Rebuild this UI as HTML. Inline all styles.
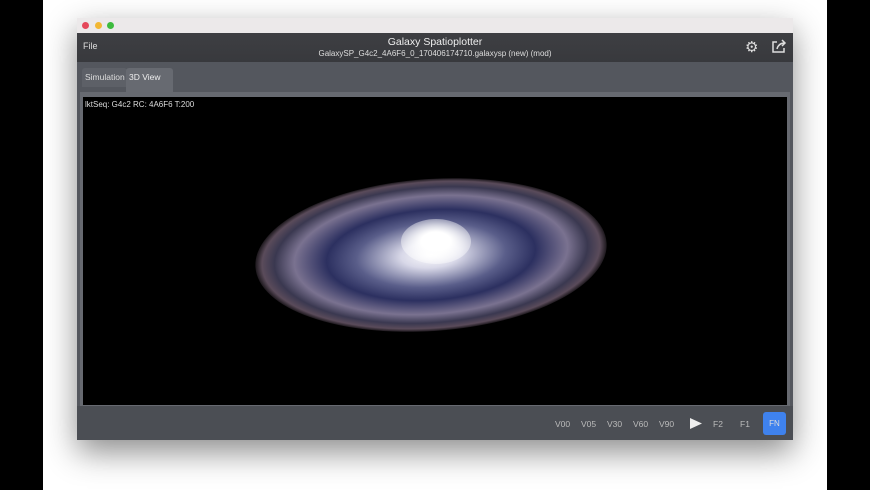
<!DOCTYPE html>
<html><head><style>
body{margin:0;width:870px;height:490px;background:#fff;position:relative;overflow:hidden;font-family:"Liberation Sans",sans-serif}
.a{position:absolute}
.v{position:absolute;top:419px;font-size:8.5px;color:#bbb}
</style></head><body>
<div class="a" style="left:0;top:0;width:43px;height:490px;background:#000"></div>
<div class="a" style="left:827px;top:0;width:43px;height:490px;background:#000"></div>
<div class="a" style="left:77px;top:18px;width:716px;height:422px;box-shadow:0 12px 30px rgba(0,0,0,.45);background:#54575e"></div>
<div class="a" style="left:77px;top:18px;width:716px;height:15px;background:#ece9ea"></div>
<div class="a" style="left:82px;top:22px;width:7px;height:7px;border-radius:50%;background:#e5485a"></div>
<div class="a" style="left:95px;top:22px;width:7px;height:7px;border-radius:50%;background:#f2b733"></div>
<div class="a" style="left:107px;top:22px;width:7px;height:7px;border-radius:50%;background:#3dbb3e"></div>
<div class="a" style="left:77px;top:33px;width:716px;height:29px;background:linear-gradient(#3e3f43,#38393d)"></div>
<div class="a" style="left:83px;top:41px;font-size:9px;color:#ddd">File</div>
<div class="a" style="left:77px;top:36px;width:716px;text-align:center;font-size:10.5px;color:#eee">Galaxy Spatioplotter</div>
<div class="a" style="left:77px;top:49px;width:716px;text-align:center;font-size:8px;color:#ddd">GalaxySP_G4c2_4A6F6_0_170406174710.galaxysp (new) (mod)</div>
<div class="a" style="left:745px;top:38px;font-size:15px;color:#ddd">⚙</div>
<svg class="a" style="left:771px;top:39px" width="16" height="14"><path d="M6 3H2v10h11V9" fill="none" stroke="#ddd" stroke-width="1.5"/><path d="M6 10c1-4 4-6 8-6M11 1l3 3-3 3" fill="none" stroke="#ddd" stroke-width="1.5"/></svg>
<div class="a" style="left:82px;top:68px;width:42px;height:19px;background:#5d6067;border-radius:3px 3px 0 0;font-size:8.5px;color:#ddd;line-height:19px;padding-left:3px">Simulation</div>
<div class="a" style="left:126px;top:68px;width:44px;height:25px;background:#676a71;border-radius:3px 3px 0 0;font-size:8.5px;color:#eee;line-height:19px;padding-left:3px">3D View</div>
<div class="a" style="left:80px;top:92px;width:710px;height:314px;background:#676a71"></div>
<div class="a" style="left:83px;top:97px;width:704px;height:308px;background:#000;overflow:hidden">
 <div class="a" style="left:2px;top:3px;font-size:8px;color:#ddd">lktSeq: G4c2 RC: 4A6F6 T:200</div>
 <div class="a" style="left:172px;top:82px;width:352px;height:152px;border-radius:50%;background:radial-gradient(ellipse at center,#fff 0%,#d8d8e8 12%,#5a5e8a 30%,#2c3060 42%,#7a7290 55%,#3a3850 63%,rgba(180,150,180,.5) 68%,rgba(0,0,0,0) 72%);transform:rotate(-4deg)"></div>
 <div class="a" style="left:318px;top:122px;width:70px;height:45px;border-radius:50%;background:radial-gradient(ellipse,#fff 30%,rgba(255,255,255,0) 100%)"></div>
</div>
<div class="a" style="left:77px;top:406px;width:716px;height:34px;background:#4b4e54"></div>
<div class="v" style="left:555px">V00</div>
<div class="v" style="left:581px">V05</div>
<div class="v" style="left:607px">V30</div>
<div class="v" style="left:633px">V60</div>
<div class="v" style="left:659px">V90</div>
<svg class="a" style="left:690px;top:418px" width="12" height="11"><path d="M0 0L12 5.5L0 11Z" fill="#eee"/></svg>
<div class="v" style="left:713px">F2</div>
<div class="v" style="left:740px">F1</div>
<div class="a" style="left:763px;top:412px;width:23px;height:23px;background:#3f82ee;border-radius:3px;font-size:8px;color:#ddd;text-align:center;line-height:23px">FN</div>
</body></html>
